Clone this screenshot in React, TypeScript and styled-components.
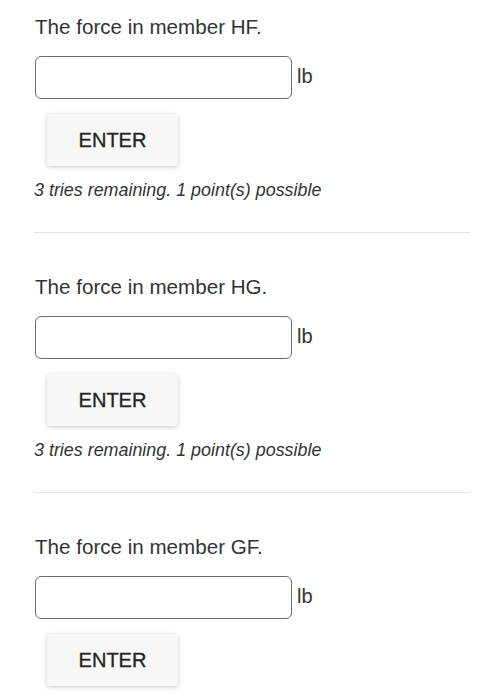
import styled, { createGlobalStyle } from "styled-components"

const GlobalStyle = createGlobalStyle`
  body {
    margin: 0;
    background: #ffffff;
    font-family: "Liberation Sans", Arial, Helvetica, sans-serif;
    color: #333333;
  }
`

const Page = styled.div`
  padding: 15px 11px 20px 34px;
`

const Question = styled.section`
  display: flex;
  flex-direction: column;
  align-items: flex-start;
`

const Prompt = styled.div`
  font-size: 20.6px;
  line-height: 24px;
  padding-left: 1px;
`

const InputRow = styled.div`
  display: flex;
  align-items: center;
  margin-top: 17px;
  padding-left: 1px;
`

const AnswerInput = styled.input`
  box-sizing: border-box;
  width: 257px;
  height: 43px;
  border: 1.5px solid #6b6b6b;
  border-radius: 6px;
  background: #ffffff;
  outline: none;
`

const Unit = styled.span`
  margin-left: 5px;
  font-size: 20px;
  color: #333333;
  margin-top: -3px;
`

const EnterButton = styled.button`
  margin: 15px 0 0 13px;
  width: 131px;
  height: 52px;
  border: none;
  border-radius: 3px;
  background: #f7f7f7;
  box-shadow: 0 1px 4px rgba(0, 0, 0, 0.22);
  font-family: "Liberation Sans", Arial, Helvetica, sans-serif;
  font-size: 20px;
  color: #222222;
  -webkit-text-stroke: 0.3px #222222;
`

const Tries = styled.div`
  margin-top: 14px;
  font-size: 17.9px;
  line-height: 20px;
  font-style: italic;
  color: #333333;
`

const Divider = styled.hr`
  align-self: stretch;
  border: none;
  border-top: 1px solid #e3e3e3;
  margin: 32px 0 42px 0;
`

const questions = ["HF", "HG", "GF"]

export default function App() {
  return (
    <>
      <GlobalStyle />
      <Page>
        {questions.map((member, i) => (
          <Question key={member}>
            <Prompt>The force in member {member}.</Prompt>
            <InputRow>
              <AnswerInput type="text" />
              <Unit>lb</Unit>
            </InputRow>
            <EnterButton>ENTER</EnterButton>
            {i < questions.length - 1 && (
              <>
                <Tries>3 tries remaining. 1 point(s) possible</Tries>
                <Divider />
              </>
            )}
          </Question>
        ))}
      </Page>
    </>
  )
}
